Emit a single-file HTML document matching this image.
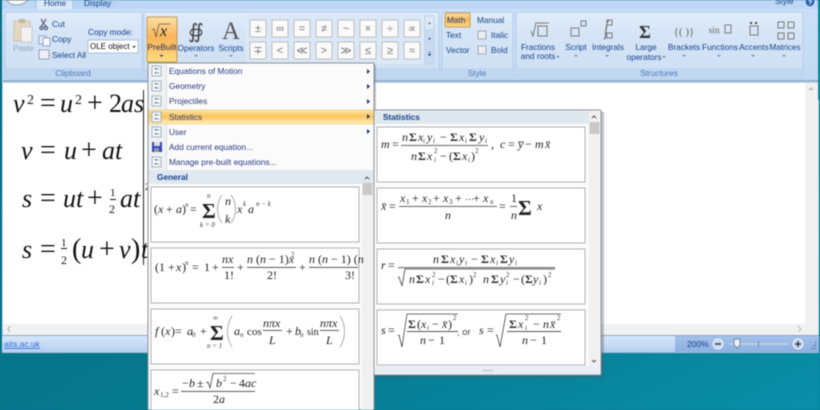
<!DOCTYPE html>
<html><head><meta charset="utf-8"><style>
html,body{margin:0;padding:0;width:820px;height:410px;overflow:hidden;background:#05778c}
svg{display:block;filter:blur(.45px)}
.u{font-family:"Liberation Sans",sans-serif;font-size:8.3px;fill:#15428b}
.g{font-family:"Liberation Sans",sans-serif;font-size:8.3px;fill:#4a7ab5}
.m{font-family:"Liberation Sans",sans-serif;font-size:8.3px;fill:#2a3b80}
.b{font-family:"Liberation Sans",sans-serif;font-size:8.3px;font-weight:bold;fill:#15428b}
.s{font-family:"Liberation Serif",serif;font-size:12px;fill:#222}
.i{font-family:"Liberation Serif",serif;font-style:italic;font-size:12px;fill:#222}
.t{font-family:"Liberation Serif",serif;font-size:7px;fill:#333}
.e{font-family:"Liberation Serif",serif;font-style:italic;font-size:7px;fill:#333}
.z{font-family:"Liberation Serif",serif;font-weight:bold;font-size:12px;fill:#333}
.Z{font-family:"Liberation Serif",serif;font-weight:bold;font-size:21px;fill:#222}
.S{font-family:"Liberation Serif",serif;font-size:28px;fill:#111}
.I{font-family:"Liberation Serif",serif;font-style:italic;font-size:26px;fill:#111}
.y{font-family:"Liberation Sans",sans-serif;font-size:11px;fill:#777;text-anchor:middle}
.a{text-anchor:middle}
</style></head><body>
<svg width="820" height="410" viewBox="0 0 820 410" xmlns="http://www.w3.org/2000/svg">
<defs>
<linearGradient id="d" x1="0" y1="0" x2="1" y2="1"><stop offset="0" stop-color="#05687c"/><stop offset=".55" stop-color="#06788e"/><stop offset="1" stop-color="#0a8ea8"/></linearGradient>
<linearGradient id="r" x1="0" y1="0" x2="0" y2="1"><stop offset="0" stop-color="#cbe0f8"/><stop offset="1" stop-color="#c2daf4"/></linearGradient>
<linearGradient id="g" x1="0" y1="0" x2="0" y2="1"><stop offset="0" stop-color="#e0ecfa"/><stop offset=".35" stop-color="#d5e4f6"/><stop offset="1" stop-color="#cfe0f5"/></linearGradient>
<linearGradient id="o" x1="0" y1="0" x2="0" y2="1"><stop offset="0" stop-color="#fde2a6"/><stop offset=".45" stop-color="#fbb45a"/><stop offset="1" stop-color="#fddc80"/></linearGradient>
<linearGradient id="p" x1="0" y1="0" x2="0" y2="1"><stop offset="0" stop-color="#fce6a6"/><stop offset=".45" stop-color="#fbc45c"/><stop offset="1" stop-color="#fff0b8"/></linearGradient>
<linearGradient id="st" x1="0" y1="0" x2="0" y2="1"><stop offset="0" stop-color="#d8e7fa"/><stop offset="1" stop-color="#b6d0f2"/></linearGradient>
<linearGradient id="sd" x1="0" y1="0" x2="0" y2="1"><stop offset="0" stop-color="#a4c2ea"/><stop offset="1" stop-color="#8cb0e0"/></linearGradient>
<g id="ic"><rect x="0" y="0" width="9" height="10" fill="#f4f7fa" stroke="#93a3b3" stroke-width=".8"/><rect x="3" y="2" width="1.500" height="1.500" fill="#46607a"/><rect x="5" y="2.500" width="2" height="1" fill="#7a8ea3"/><rect x="3" y="6" width="1.500" height="1.500" fill="#46607a"/><rect x="5" y="6.500" width="2" height="1" fill="#7a8ea3"/></g>
<g id="card"><rect x="0" y="0" width="208" height="55" fill="#fff" stroke="#b0b0b0" stroke-width="1"/></g>
</defs>

<rect width="820" height="410" fill="url(#d)"/>

<!-- window -->
<rect x="2" y="0" width="817" height="352" fill="#c2daf4"/>
<rect x="2" y="0" width="816" height="10" fill="#bdd7f4"/>
<rect x="0" y="0" width="2" height="83" fill="#0b6f86"/>
<rect x="818" y="0" width="2" height="100" fill="#0b87a0"/>
<path d="M7 0 C10 6 22 7 28 0Z" fill="#f7f7f5" stroke="#888" stroke-width=".7"/>
<rect x="36" y="-1" width="37" height="12" fill="#dbe8f8" stroke="#a6c3e6"/>
<rect x="74" y="0" width="42" height="10" fill="#b7d3f2"/>
<text x="44" y="6" class="u">Home</text>
<text x="84" y="6" class="u">Display</text>
<text x="775" y="4" class="u">Style</text>
<circle cx="810" cy="2" r="5" fill="#2c62b6" stroke="#e2ebf5"/>
<text x="808" y="5" font-family="Liberation Sans" font-size="7" font-weight="bold" fill="#fff">?</text>

<!-- ribbon -->
<rect x="2" y="9" width="816" height="73" fill="url(#r)"/>
<rect x="3" y="80" width="815" height="2" fill="#97afcc"/>
<!-- clipboard -->
<rect x="5" y="12" width="137" height="66" rx="2" fill="url(#g)" stroke="#b4cde8"/>
<rect x="6" y="68" width="135" height="10" fill="#c1d7f0"/>
<text x="73" y="76" class="g a">Clipboard</text>
<rect x="14" y="21" width="16" height="20" fill="#e5d8bd" stroke="#c9c0ae"/>
<rect x="19" y="19" width="6" height="4" fill="#bfb8aa"/>
<rect x="21" y="27" width="11" height="15" fill="#f2f2ef" stroke="#c3cad2"/>
<text x="13" y="51" font-family="Liberation Sans" font-size="8" fill="#96a3b4">Paste</text>
<path d="M41 19l5 8M46 19l-5 8" stroke="#667" stroke-width="1.200"/><circle cx="41.500" cy="28" r="1.600" fill="none" stroke="#346"/><circle cx="46" cy="28" r="1.600" fill="none" stroke="#346"/>
<rect x="39" y="36" width="7" height="8" fill="#e8eef6" stroke="#6c89ae" stroke-width=".7"/><rect x="43" y="38" width="7" height="8" fill="#f6f8fb" stroke="#6c89ae" stroke-width=".7"/>
<rect x="39" y="50" width="10" height="9" fill="#eef" stroke="#555" stroke-width=".8" stroke-dasharray="1.500 1"/>
<text x="52" y="27" class="u">Cut</text><text x="52" y="42" class="u">Copy</text><text x="52" y="58" class="u">Select All</text>
<text x="88" y="35" class="u">Copy mode:</text>
<rect x="88" y="40" width="50" height="13" fill="#fff" stroke="#a9c0dc"/>
<text x="90" y="49" font-family="Liberation Sans" font-size="8" fill="#111">OLE object</text>
<path d="M132 46h4l-2 2z" fill="#345"/>

<!-- math group -->
<rect x="144" y="12" width="295" height="66" rx="2" fill="url(#g)" stroke="#b4cde8"/>
<rect x="145" y="68" width="293" height="10" fill="#c1d7f0"/>
<rect x="147" y="17" width="30" height="45" rx="1" fill="url(#o)" stroke="#c09a58"/>
<path d="M152 30l2-1 2 8 3-13h11" fill="none" stroke="#6a5a48" stroke-width=".8"/>
<text x="160" y="36" class="i" font-size="16" style="font-size:16px" fill="#555">x</text>
<text x="162" y="50" font-family="Liberation Sans" font-size="8.300" fill="#2a2a50" text-anchor="middle">PreBuilt</text>
<path d="M159.500 55h4l-2 2z" fill="#15428b"/>
<text x="196" y="38" font-family="DejaVu Sans" font-size="20" fill="#444" text-anchor="middle">∯</text>
<text x="196" y="51" class="u a">Operators</text>
<path d="M194 55h4l-2 2z" fill="#6b8ab0"/>
<text x="231" y="39" font-family="Liberation Serif" font-size="25" fill="#555" text-anchor="middle">A</text>
<text x="231" y="51" class="u a">Scripts</text>
<path d="M229 55h4l-2 2z" fill="#6b8ab0"/>
<rect x="246" y="15" width="179" height="49" fill="#dbe8f7"/>
<!-- symbol buttons -->
<g fill="#fafafa" stroke="#bdbdbd" stroke-width="1">
<rect x="250" y="20" width="16" height="17"/><rect x="272" y="20" width="16" height="17"/><rect x="294" y="20" width="16" height="17"/><rect x="316" y="20" width="16" height="17"/><rect x="338" y="20" width="16" height="17"/><rect x="360" y="20" width="16" height="17"/><rect x="382" y="20" width="16" height="17"/><rect x="404" y="20" width="16" height="17"/>
<rect x="250" y="42" width="16" height="17"/><rect x="272" y="42" width="16" height="17"/><rect x="294" y="42" width="16" height="17"/><rect x="316" y="42" width="16" height="17"/><rect x="338" y="42" width="16" height="17"/><rect x="360" y="42" width="16" height="17"/><rect x="382" y="42" width="16" height="17"/><rect x="404" y="42" width="16" height="17"/>
</g>
<text x="258" y="32" class="y">±</text><text x="280" y="32" class="y">∞</text><text x="302" y="32" class="y">=</text><text x="324" y="32" class="y">≠</text><text x="346" y="32" class="y">~</text><text x="368" y="32" class="y">×</text><text x="390" y="32" class="y">÷</text><text x="412" y="32" class="y">∝</text>
<text x="258" y="54" class="y">∓</text><text x="280" y="54" class="y">&lt;</text><text x="302" y="54" class="y">≪</text><text x="324" y="54" class="y">&gt;</text><text x="346" y="54" class="y">≫</text><text x="368" y="54" class="y">≤</text><text x="390" y="54" class="y">≥</text><text x="412" y="54" class="y">≈</text>
<rect x="425" y="16" width="9" height="14" fill="#dce9f8" stroke="#bcd0e8"/><rect x="425" y="30" width="9" height="13" fill="#c8dbf2" stroke="#bcd0e8"/><rect x="425" y="43" width="9" height="21" fill="#c8dbf2" stroke="#bcd0e8"/>
<path d="M428 24h3l-1.500-2z" fill="#667"/><path d="M428 38h3l-1.500 2z" fill="#15428b"/><path d="M428 52h3M428 54h3l-1.500 2z" stroke="#15428b" stroke-width=".5" fill="#15428b"/>

<!-- style group -->
<rect x="442" y="12" width="71" height="66" rx="2" fill="url(#g)" stroke="#b4cde8"/>
<rect x="443" y="68" width="69" height="10" fill="#c1d7f0"/>
<text x="477" y="76" class="g a">Style</text>
<rect x="445" y="13" width="25" height="14" rx="1" fill="url(#o)" stroke="#c79a58"/>
<text x="447" y="23" class="u">Math</text>
<text x="446" y="38" class="u">Text</text><text x="446" y="53" class="u">Vector</text>
<text x="477" y="23" class="u">Manual</text>
<rect x="478" y="31" width="8" height="8" fill="#e8eef4" stroke="#a5a9ae"/><rect x="478" y="46" width="8" height="8" fill="#e8eef4" stroke="#a5a9ae"/>
<text x="491" y="38" class="u">Italic</text><text x="491" y="53" class="u">Bold</text>

<!-- structures -->
<rect x="516" y="12" width="287" height="66" rx="2" fill="url(#g)" stroke="#b4cde8"/>
<rect x="517" y="68" width="285" height="10" fill="#c1d7f0"/>
<text x="659" y="76" class="g a">Structures</text>
<g fill="none" stroke="#7a7a7a" stroke-width="1">
<path d="M531 31l2 5 3-13h13"/><rect x="538" y="26" width="9" height="10"/>
<rect x="571" y="28" width="8" height="8"/><rect x="581" y="21" width="5" height="5"/>
<path d="M604 39c2 0 1-3 2-9s1-9 3-9" stroke="#555"/><rect x="607" y="20" width="5" height="5"/><rect x="607" y="33" width="5" height="5"/>
<rect x="750" y="26" width="8" height="9"/>
<rect x="778" y="22" width="6" height="6"/><rect x="788" y="22" width="6" height="6"/><rect x="778" y="33" width="6" height="6"/><rect x="788" y="33" width="6" height="6"/>
<rect x="725" y="25" width="6" height="8"/>
</g>
<path d="M750 23h2M755 23h2" stroke="#444" stroke-width="2"/>
<text x="645" y="38" font-family="Liberation Serif" font-weight="bold" font-size="18" fill="#333" text-anchor="middle">Σ</text>
<text x="684" y="35" font-family="Liberation Serif" font-size="11" text-anchor="middle" fill="#666">{( )}</text>
<text x="714" y="33" font-family="Liberation Serif" font-size="9.500" text-anchor="middle" fill="#666">sin</text>
<text x="538" y="50" class="u a">Fractions</text><text x="538" y="59" class="u a">and roots</text>
<text x="576" y="50" class="u a">Script</text>
<text x="608" y="50" class="u a">Integrals</text>
<text x="646" y="50" class="u a">Large</text><text x="644" y="60" class="u a">operators</text>
<text x="684" y="50" class="u a">Brackets</text>
<text x="720" y="50" class="u a">Functions</text>
<text x="754" y="50" class="u a">Accents</text>
<text x="785" y="50" class="u a">Matrices</text>
<g fill="#6b8ab0"><path d="M574 55h4l-2 2z"/><path d="M605 55h4l-2 2z"/><path d="M682 55h4l-2 2z"/><path d="M717 55h4l-2 2z"/><path d="M751 55h4l-2 2z"/><path d="M782 55h4l-2 2z"/><path d="M662 56h4l-2 2z"/><path d="M556 56h4l-2 2z"/></g>

<!-- document -->
<rect x="3" y="83" width="802" height="241" fill="#fff"/>
<rect x="805" y="83" width="13" height="241" fill="#f1f1f1"/>
<rect x="3" y="324" width="815" height="12" fill="#f1f1f1"/>
<path d="M10 326l-2 3 2 3" stroke="#aaa" fill="none"/>
<path d="M798 326l3 3-3 3" stroke="#bbb" fill="none"/>
<path d="M808 90l3-3 3 3z" fill="#bbb"/>
<rect x="143" y="90" width="1" height="175" fill="#222"/>
<text x="13" y="112" class="I">v</text><text x="27" y="104" class="S" style="font-size:14px">2</text>
<text x="40" y="112" class="S">=</text><text x="60" y="112" class="I">u</text><text x="75" y="104" class="S" style="font-size:14px">2</text>
<text x="87" y="112" class="S">+</text><text x="109" y="112" class="S" style="font-size:26px">2</text><text x="121" y="112" class="I">as</text>
<text x="21" y="159" class="I">v</text><text x="40" y="159" class="S">=</text><text x="64" y="159" class="I">u</text><text x="81" y="159" class="S">+</text><text x="102" y="159" class="I">at</text>
<text x="22" y="207" class="I">s</text><text x="40" y="207" class="S">=</text><text x="63" y="207" class="I">ut</text><text x="87" y="207" class="S">+</text>
<text x="110" y="196" class="S" style="font-size:11px">1</text><rect x="110" y="199" width="6" height="1" fill="#111"/><text x="109" y="213" class="S" style="font-size:12px">2</text>
<text x="120" y="207" class="I">at</text><text x="145" y="190" class="S" style="font-size:9px">2</text>
<text x="22" y="258" class="I">s</text><text x="40" y="258" class="S">=</text>
<text x="61" y="246" class="S" style="font-size:11px">1</text><rect x="61" y="248" width="6" height="1" fill="#111"/><text x="61" y="264" class="S" style="font-size:12px">2</text>
<text x="72" y="258" class="S" style="font-size:28px">(</text><text x="81" y="258" class="I">u</text><text x="99" y="258" class="S">+</text><text x="119" y="258" class="I">v</text><text x="131" y="258" class="S" style="font-size:28px">)</text><text x="141" y="258" class="I">t</text>

<!-- status -->
<rect x="2" y="336" width="673" height="16" fill="url(#st)"/>
<rect x="675" y="336" width="144" height="16" fill="url(#sd)"/>
<rect x="2" y="335" width="817" height="1" fill="#8ba7c7"/>
<rect x="2" y="352" width="817" height="1" fill="#a9bfd8"/>
<text x="4" y="347" font-family="Liberation Sans" font-size="8.500" fill="#2c6ed5" text-decoration="underline">aits.ac.uk</text>
<text x="687" y="347" font-family="Liberation Sans" font-size="8.500" fill="#15428b">200%</text>
<circle cx="718" cy="344" r="5" fill="#c9d7e8" stroke="#eef"/><path d="M715 344h6" stroke="#234" stroke-width="1.300"/>
<rect x="729" y="343" width="59" height="2" fill="#b8cfe9"/><rect x="758" y="341" width="1" height="6" fill="#6b8ab0"/>
<path d="M734 339h6v6l-3 3-3-3z" fill="#e8eff8" stroke="#546b8a" stroke-width=".7"/>
<circle cx="798" cy="344" r="5" fill="#c9d7e8" stroke="#eef"/><path d="M795 344h6M798 341v6" stroke="#234" stroke-width="1.300"/>
<g fill="#31537f"><rect x="815" y="342" width="1" height="1"/><rect x="813" y="345" width="1" height="1"/><rect x="815" y="345" width="1" height="1"/><rect x="811" y="348" width="1" height="1"/><rect x="813" y="348" width="1" height="1"/><rect x="815" y="348" width="1" height="1"/></g>

<!-- menu -->
<rect x="150" y="65" width="226" height="345" fill="#55606b" opacity=".35"/>
<rect x="148" y="63" width="226" height="347" fill="#fbfbfb" stroke="#8a8f96"/>
<rect x="149" y="64" width="17" height="106" fill="#eff0f1"/>
<rect x="166" y="64" width="1" height="106" fill="#dddddd"/>
<rect x="149" y="110" width="224" height="14" fill="url(#p)" stroke="#e8c87e" stroke-width=".6"/>
<use href="#ic" x="152" y="66"/><use href="#ic" x="152" y="81"/><use href="#ic" x="152" y="96"/><use href="#ic" x="152" y="112"/><use href="#ic" x="152" y="127"/><use href="#ic" x="152" y="157"/>
<rect x="152" y="142" width="10" height="10" fill="#3548b0"/><rect x="154" y="142" width="6" height="4" fill="#dde"/><rect x="154" y="148" width="5" height="4" fill="#8c93b0"/>
<text x="169" y="74" class="m">Equations of Motion</text>
<text x="169" y="89" class="m">Geometry</text>
<text x="169" y="104" class="m">Projectiles</text>
<text x="169" y="120" class="m">Statistics</text>
<text x="169" y="135" class="m">User</text>
<text x="169" y="150" class="m">Add current equation...</text>
<text x="169" y="165" class="m">Manage pre-built equations...</text>
<g fill="#1d2f78"><path d="M367 69l3 2.500-3 2.500z"/><path d="M367 84l3 2.500-3 2.500z"/><path d="M367 99l3 2.500-3 2.500z"/><path d="M367 114l3 2.500-3 2.500z"/><path d="M367 129l3 2.500-3 2.500z"/></g>
<rect x="149" y="170" width="224" height="14" fill="#dfe8ef"/>
<text x="157" y="180" class="b">General</text>
<rect x="362" y="184" width="11" height="226" fill="#f0f0f0"/>
<rect x="362.500" y="183" width="10" height="12" fill="#c9c9c9"/>
<path d="M365 179l2-2 2 2" fill="none" stroke="#555" stroke-width="1"/>

<use href="#card" x="151" y="187"/><use href="#card" x="151" y="248"/><use href="#card" x="151" y="309"/>
<rect x="151" y="370" width="208" height="42" fill="#fff" stroke="#b0b0b0"/>

<!-- (x+a)^n -->
<text x="154" y="213" class="s">(</text><text x="158" y="213" class="i">x</text><text x="166" y="213" class="s">+</text><text x="176" y="213" class="i">a</text><text x="182" y="213" class="s">)</text>
<text x="185" y="207" class="e">n</text><text x="190" y="213" class="s">=</text>
<text x="202" y="218" class="Z">Σ</text>
<text x="207" y="198" class="e">n</text>
<text x="200" y="227" class="e">k<tspan class="t"> = 0</tspan></text>
<path d="M222 195c-6 8-6 20 0 28M231 195c6 8 6 20 0 28" fill="none" stroke="#999" stroke-width=".8"/>
<text x="225" y="205" class="i">n</text><text x="225" y="223" class="i">k</text>
<text x="237" y="213" class="i">x</text><text x="243" y="206" class="e">k</text><text x="248" y="213" class="i">a</text><text x="256" y="206" class="e">n − k</text>

<!-- (1+x)^n -->
<text x="155" y="271" class="s">(1 +</text><text x="176" y="271" class="i">x</text><text x="182" y="271" class="s">)</text>
<text x="185" y="265" class="e">n</text>
<text x="192" y="271" class="s">=</text><text x="204" y="271" class="s">1</text><text x="212" y="271" class="s">+</text>
<text x="222" y="263" class="i">nx</text><rect x="222" y="267" width="12" height=".8" fill="#333"/><text x="224" y="279" class="s">1!</text>
<text x="237" y="271" class="s">+</text>
<text x="247" y="263" class="s"><tspan class="i">n</tspan> (<tspan class="i">n</tspan> − 1)<tspan class="i">x</tspan></text><text x="291" y="257" class="t">2</text>
<rect x="247" y="267" width="49" height=".8" fill="#333"/><text x="267" y="279" class="s">2!</text>
<text x="299" y="271" class="s">+</text>
<text x="309" y="263" class="s"><tspan class="i">n</tspan> (<tspan class="i">n</tspan> − 1) (<tspan class="i">n</tspan></text>
<rect x="309" y="267" width="49" height=".8" fill="#333"/><text x="345" y="279" class="s">3!</text>

<!-- f(x) -->
<text x="155" y="335" class="i">f</text><text x="161" y="335" class="s">(</text><text x="165" y="335" class="i">x</text><text x="171" y="335" class="s">)</text><text x="175" y="335" class="s">=</text><text x="187" y="335" class="i">a</text>
<text x="192" y="337" class="t">0</text><text x="200" y="335" class="s">+</text>
<text x="210" y="340" class="Z">Σ</text>
<text x="213" y="320" class="t">∞</text><text x="207" y="348" class="e">n<tspan class="t"> = 1</tspan></text>
<path d="M232 316c-6 9-6 22 0 31M340 316c6 9 6 22 0 31" fill="none" stroke="#999" stroke-width=".8"/>
<text x="234" y="335" class="i">a</text><text x="240" y="337" class="e">n</text>
<text x="247" y="335" class="s" style="font-size:11px">cos</text>
<text x="263" y="327" class="i">nπx</text><rect x="263" y="330" width="19" height=".8" fill="#333"/><text x="269" y="344" class="i">L</text>
<text x="286" y="335" class="s">+</text><text x="295" y="335" class="i">b</text><text x="300" y="337" class="e">n</text>
<text x="307" y="335" class="s" style="font-size:10px">sin</text>
<text x="320" y="327" class="i">nπx</text><rect x="320" y="330" width="19" height=".8" fill="#333"/><text x="326" y="344" class="i">L</text>

<!-- quadratic -->
<text x="154" y="395" class="i">x</text><text x="160" y="397" class="t">1,2</text><text x="172" y="395" class="s">=</text>
<text x="182" y="387" class="s">−</text><text x="189" y="387" class="i">b</text><text x="197" y="387" class="s">±</text>
<path d="M206 383l2-1 2 6 3-14.500h42" fill="none" stroke="#444" stroke-width=".8"/>
<text x="216" y="387" class="i">b</text><text x="223" y="381" class="t">2</text>
<text x="230" y="387" class="s">−</text><text x="239" y="387" class="s">4<tspan class="i">ac</tspan></text>
<rect x="181" y="391" width="74" height=".8" fill="#333"/><text x="213" y="403" class="s">2<tspan class="i">a</tspan></text>

<!-- stats panel -->
<rect x="376" y="112" width="228" height="266" fill="#4a5560" opacity=".35"/>
<rect x="374" y="110" width="227" height="265" rx="1" fill="#fbfbfb" stroke="#8a8f96"/>
<rect x="375" y="111" width="214" height="13" fill="#dfe8ef"/>
<text x="383" y="120" class="b">Statistics</text>
<rect x="589" y="111" width="11" height="255" fill="#f0f0f0"/>
<rect x="589.500" y="122" width="10" height="12" fill="#c9c9c9"/>
<path d="M592 118l2-2 2 2" fill="none" stroke="#555"/><path d="M592 360l2 2 2-2" fill="none" stroke="#555"/>
<rect x="375" y="366" width="225" height="8" fill="#e8eef3"/>
<path d="M483 370.500h9" stroke="#88a" stroke-dasharray="1 1"/>
<use href="#card" x="377" y="127"/><use href="#card" x="377" y="188"/><use href="#card" x="377" y="249"/><use href="#card" x="377" y="310"/>

<!-- m = -->
<text x="381" y="148" class="i">m</text><text x="392" y="148" class="s">=</text>
<text x="402" y="141" class="i">n</text><text x="409" y="141" class="z">Σ</text><text x="418" y="141" class="i">x</text><text x="423" y="143" class="e">i</text><text x="427" y="141" class="i">y</text><text x="433" y="143" class="e">i</text><text x="440" y="141" class="s">−</text><text x="450" y="141" class="z">Σ</text><text x="459" y="141" class="i">x</text><text x="465" y="143" class="e">i</text><text x="469" y="141" class="z">Σ</text><text x="479" y="141" class="i">y</text><text x="485" y="143" class="e">i</text>
<rect x="401" y="145" width="87" height=".9" fill="#555"/>
<text x="411" y="160" class="i">n</text><text x="418" y="160" class="z">Σ</text><text x="427" y="160" class="i">x</text><text x="434" y="153" class="t">2</text><text x="434" y="162" class="e">i</text>
<text x="440" y="160" class="s">−</text><text x="449" y="160" class="s">(</text><text x="453" y="160" class="z">Σ</text><text x="462" y="160" class="i">x</text><text x="468" y="162" class="e">i</text><text x="471" y="160" class="s">)</text><text x="475" y="153" class="t">2</text>
<text x="491" y="148" class="s">,</text>
<text x="500" y="148" class="i">c</text><text x="508" y="148" class="s">=</text><text x="518" y="148" class="i">y̅</text><text x="525" y="148" class="s">−</text><text x="535" y="148" class="i">m</text><text x="545" y="148" class="i">x̄</text>

<!-- x bar -->
<text x="381" y="210" class="i">x̄</text><text x="389" y="210" class="s">=</text>
<text x="400" y="202" class="i">x</text><text x="406" y="204" class="t">1</text><text x="412" y="202" class="s">+</text><text x="422" y="202" class="i">x</text><text x="428" y="204" class="t">2</text><text x="433" y="202" class="s">+</text><text x="443" y="202" class="i">x</text><text x="449" y="204" class="t">3</text><text x="455" y="202" class="s">+</text><text x="465" y="202" class="s" style="font-size:9px">⋯</text><text x="473" y="202" class="s">+</text><text x="483" y="202" class="i">x</text><text x="490" y="204" class="e">n</text>
<rect x="399" y="206" width="98" height=".9" fill="#555"/><text x="445" y="219" class="i">n</text>
<text x="499" y="210" class="s">=</text>
<text x="511" y="202" class="s">1</text><rect x="510" y="206" width="7" height=".9" fill="#555"/><text x="511" y="219" class="i">n</text>
<text x="518" y="215" class="Z">Σ</text><text x="537" y="210" class="i">x</text>

<!-- r -->
<text x="381" y="269" class="i">r</text><text x="388" y="269" class="s">=</text>
<text x="433" y="263" class="i">n</text><text x="441" y="263" class="z">Σ</text><text x="450" y="263" class="i">x</text><text x="456" y="265" class="e">i</text><text x="459" y="263" class="i">y</text><text x="465" y="265" class="e">i</text><text x="471" y="263" class="s">−</text><text x="481" y="263" class="z">Σ</text><text x="490" y="263" class="i">x</text><text x="496" y="265" class="e">i</text><text x="500" y="263" class="z">Σ</text><text x="509" y="263" class="i">y</text><text x="515" y="265" class="e">i</text>
<rect x="398" y="267" width="157" height="1.200" fill="#777"/>
<path d="M398 278l1-1 3 9 3-17h150" fill="none" stroke="#444" stroke-width=".8"/>
<text x="409" y="283" class="i">n</text><text x="416" y="283" class="z">Σ</text><text x="425" y="283" class="i">x</text><text x="432" y="277" class="t">2</text><text x="432" y="285" class="e">i</text>
<text x="438" y="283" class="s">−</text><text x="446" y="283" class="s">(</text><text x="450" y="283" class="z">Σ</text><text x="459" y="283" class="i">x</text><text x="465" y="285" class="e">i</text><text x="469" y="283" class="s">)</text><text x="473" y="277" class="t">2</text>
<text x="483" y="283" class="i">n</text><text x="491" y="283" class="z">Σ</text><text x="500" y="283" class="i">y</text><text x="506" y="277" class="t">2</text><text x="506" y="285" class="e">i</text>
<text x="513" y="283" class="s">−</text><text x="521" y="283" class="s">(</text><text x="525" y="283" class="z">Σ</text><text x="533" y="283" class="i">y</text><text x="539" y="285" class="e">i</text><text x="543" y="283" class="s">)</text><text x="548" y="277" class="t">2</text>

<!-- s -->
<text x="381" y="334" class="i">s</text><text x="388" y="334" class="s">=</text>
<path d="M398 336l1-1 3 12 5-33h51" fill="none" stroke="#444" stroke-width=".8"/>
<text x="408" y="328" class="z">Σ</text><text x="417" y="328" class="s">(</text><text x="421" y="328" class="i">x</text><text x="427" y="330" class="e">i</text><text x="432" y="328" class="s">−</text><text x="442" y="328" class="i">x̄</text><text x="448" y="328" class="s">)</text><text x="453" y="320" class="t">2</text>
<rect x="407" y="331" width="51" height="1" fill="#555"/><text x="420" y="344" class="i">n</text><text x="428" y="344" class="s">−</text><text x="439" y="344" class="s">1</text>
<text x="457" y="335" font-family="Liberation Sans" font-size="9.500" fill="#444">, or</text>
<text x="479" y="334" class="i">s</text><text x="487" y="334" class="s">=</text>
<path d="M496 336l1-1 3 12 6-33h55" fill="none" stroke="#444" stroke-width=".8"/>
<text x="509" y="328" class="z">Σ</text><text x="518" y="328" class="i">x</text><text x="525" y="320" class="t">2</text><text x="525" y="330" class="e">i</text>
<text x="533" y="328" class="s">−</text><text x="543" y="328" class="i">n</text><text x="550" y="328" class="i">x̄</text><text x="557" y="320" class="t">2</text>
<rect x="507" y="331" width="54" height="1" fill="#555"/><text x="522" y="344" class="i">n</text><text x="530" y="344" class="s">−</text><text x="541" y="344" class="s">1</text>
</svg>
</body></html>
